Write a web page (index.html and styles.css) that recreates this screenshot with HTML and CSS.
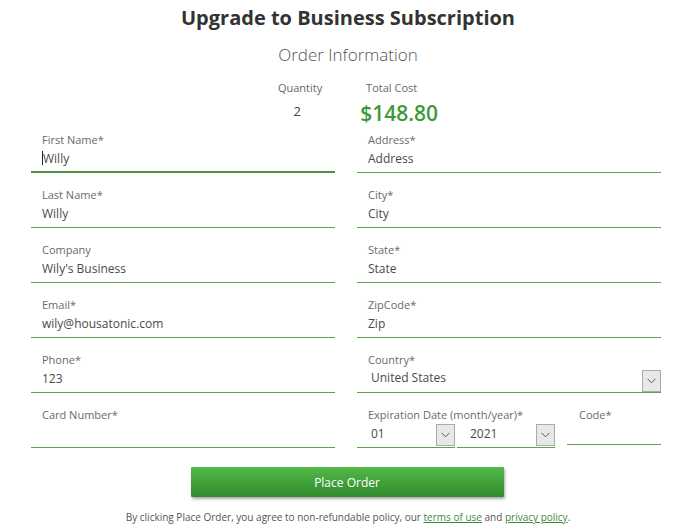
FILE: index.html
```html
<!DOCTYPE html>
<html>
<head>
<meta charset="utf-8">
<link rel="stylesheet" href="styles.css">
</head>
<body>
<div class="page">
  <h1 class="title">Upgrade to Business Subscription</h1>
  <h2 class="subtitle">Order Information</h2>
  <div class="summary">
    <div class="sum-col qty">
      <div class="sum-label">Quantity</div>
      <div class="sum-qty">2</div>
    </div>
    <div class="sum-col cost">
      <div class="sum-label">Total Cost</div>
      <div class="sum-cost">$148.80</div>
    </div>
  </div>
  <div class="form">
    <div class="field focused"><div class="label">First Name*</div><div class="value"><span class="caret"></span>Willy</div></div>
    <div class="field"><div class="label">Address*</div><div class="value">Address</div></div>
    <div class="field"><div class="label">Last Name*</div><div class="value">Willy</div></div>
    <div class="field"><div class="label">City*</div><div class="value">City</div></div>
    <div class="field"><div class="label">Company</div><div class="value">Wily's Business</div></div>
    <div class="field"><div class="label">State*</div><div class="value">State</div></div>
    <div class="field"><div class="label">Email*</div><div class="value">wily@housatonic.com</div></div>
    <div class="field"><div class="label">ZipCode*</div><div class="value">Zip</div></div>
    <div class="field"><div class="label">Phone*</div><div class="value">123</div></div>
    <div class="field select-field"><div class="label">Country*</div>
      <div class="value sel"><span class="sel-text">United States</span>
        <span class="dd"><svg width="9" height="6" viewBox="0 0 9 6"><path d="M0.5 0.8 L4.5 4.8 L8.5 0.8" fill="none" stroke="#555" stroke-width="1"/></svg></span>
      </div>
    </div>
    <div class="field"><div class="label">Card Number*</div><div class="value"></div></div>
    <div class="exp-row">
      <div class="exp">
        <div class="label">Expiration Date (month/year)*</div>
        <div class="exp-sels">
          <div class="minisel"><span class="sel-text">01</span><span class="dd"><svg width="9" height="6" viewBox="0 0 9 6"><path d="M0.5 0.8 L4.5 4.8 L8.5 0.8" fill="none" stroke="#555" stroke-width="1"/></svg></span></div>
          <div class="minisel"><span class="sel-text">2021</span><span class="dd"><svg width="9" height="6" viewBox="0 0 9 6"><path d="M0.5 0.8 L4.5 4.8 L8.5 0.8" fill="none" stroke="#555" stroke-width="1"/></svg></span></div>
        </div>
      </div>
      <div class="code">
        <div class="label">Code*</div>
        <div class="value"></div>
      </div>
    </div>
  </div>
  <div class="actions">
    <button class="btn">Place Order</button>
  </div>
  <p class="legal">By clicking Place Order, you agree to non-refundable policy, our <a href="#">terms of use</a> and <a href="#">privacy policy</a>.</p>
</div>
</body>
</html>
```
FILE: styles.css
```css
html, body { margin: 0; padding: 0; background: #fff; }
body { font-family: "Open Sans", "Noto Sans", sans-serif; color: #444; }
.page { width: 696px; }
.title {
  margin: 0; padding-top: 5px;
  text-align: center; font-size: 20px; font-weight: 700; color: #333;
  line-height: 26px;
}
.subtitle {
  margin: 0; padding-top: 13px;
  text-align: center; font-size: 17px; font-weight: 300; color: #555;
  line-height: 22px;
}
.summary {
  display: flex; justify-content: center; gap: 23px;
  padding-top: 14px;
}
.sum-col { display: flex; flex-direction: column; align-items: center; }
.qty { margin-left: 20px; }
.sum-label { font-size: 11px; color: #666; line-height: 16px; }
.sum-qty { font-size: 13px; color: #444; line-height: 20px; padding-top: 5px; margin-right: 6px; }
.sum-cost { font-size: 21px; font-weight: 600; color: #3d9a3a; line-height: 24px; padding-top: 5px; margin-left: 15px; }
.form {
  display: grid; grid-template-columns: 304px 304px; column-gap: 22px; row-gap: 14px;
  padding-left: 31px; padding-top: 7px;
}
.field { border-bottom: 1px solid #5ea04f; padding-bottom: 3px; }
.field.focused { border-bottom: 2px solid #4f9244; padding-bottom: 2px; }
.label { font-size: 11px; color: #6a6a6a; line-height: 16px; padding-left: 11px; white-space: nowrap; }
.value { font-size: 12px; color: #4a4a4a; line-height: 20px; height: 20px; padding-left: 11px; padding-top: 1px; }
.caret { display: inline-block; width: 1px; height: 14px; background: #222; vertical-align: -2px; }
.sel { display: flex; justify-content: space-between; align-items: flex-start; padding-left: 14px; }
.select-field { padding-bottom: 0; }
.select-field .value { height: 24px; padding-top: 0; line-height: 20px; }
.sel .sel-text { padding-top: 0; }
.sel .dd { margin-top: 2px; }
.dd {
  width: 19px; height: 22px; box-sizing: border-box;
  background: #e8e8e8; border: 1px solid #aaa;
  display: flex; align-items: center; justify-content: center;
}
.exp-row { display: flex; gap: 12px; }
.exp { width: 198px; }
.exp-sels { display: flex; gap: 2px; padding-top: 1px; }
.minisel {
  width: 98px; height: 24px; box-sizing: border-box;
  border-bottom: 1px solid #5ea04f;
  display: flex; justify-content: space-between; align-items: flex-start;
  font-size: 12px; color: #4a4a4a; line-height: 20px;
}
.minisel .sel-text { padding-left: 14px; }
.exp-sels .minisel:last-child .sel-text { padding-left: 13px; }
.code { flex: 1; border-bottom: 1px solid #5ea04f; padding-bottom: 3px; align-self: flex-start; height: 38px; box-sizing: border-box; }
.code .label { padding-left: 12px; }
.actions { display: flex; justify-content: center; padding-top: 19px; margin-left: -2px; }
.btn {
  width: 313px; height: 30px; border: none; border-radius: 1px;
  background: linear-gradient(#52b947, #2f8a2c);
  color: #fff; font-family: "Open Sans", sans-serif; font-size: 12px;
  box-shadow: 1px 2px 3px rgba(0,0,0,0.35);
}
.legal {
  margin: 0; padding-top: 13px; text-align: center;
  font-size: 10px; color: #555; line-height: 14px;
}
.legal a { color: #3d8a3a; }
```
